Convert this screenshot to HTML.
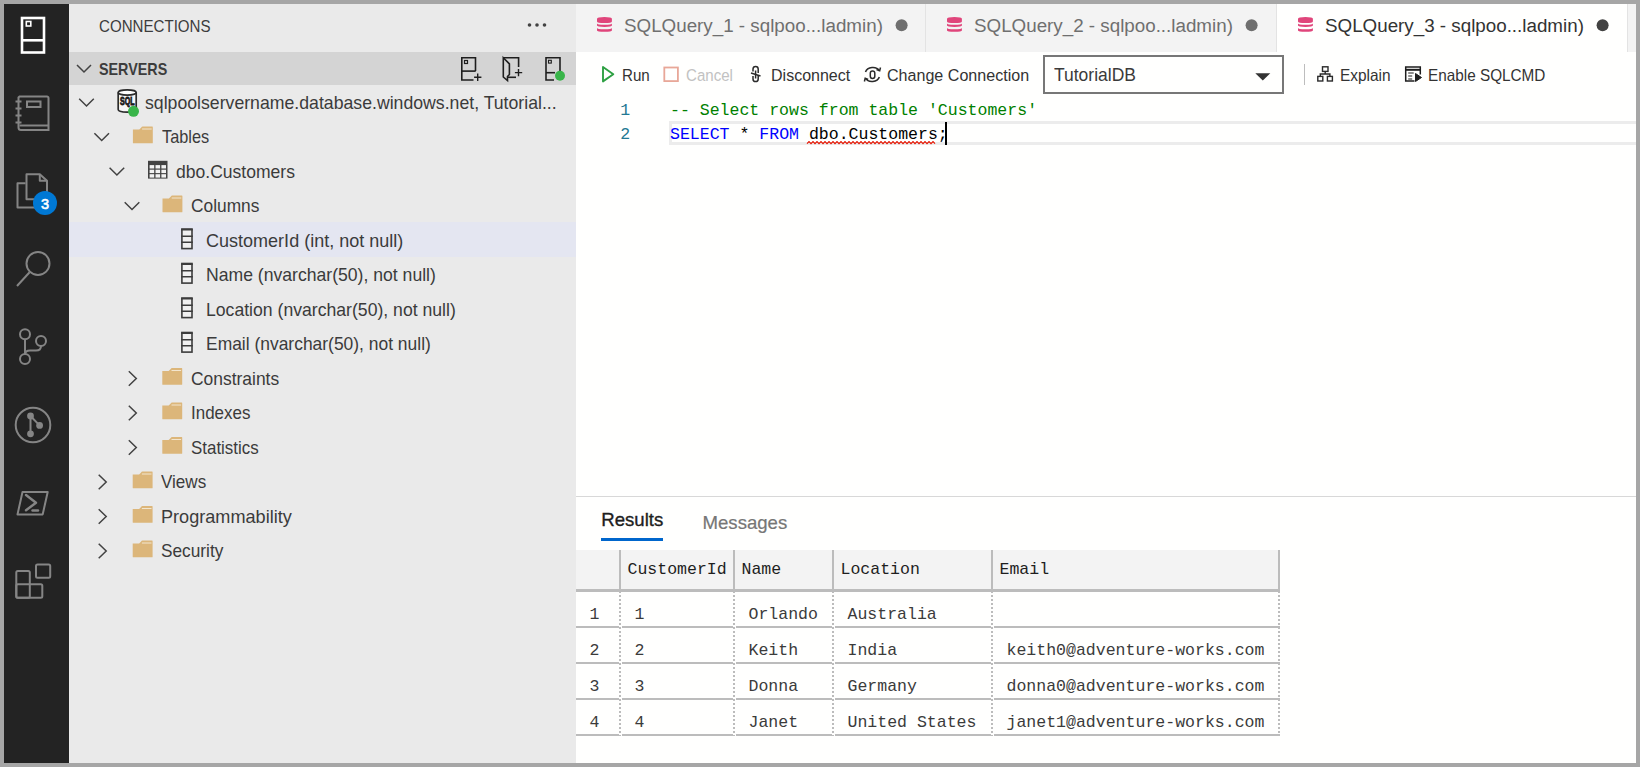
<!DOCTYPE html>
<html><head><meta charset="utf-8">
<style>
*{margin:0;padding:0;box-sizing:border-box}
html,body{width:1640px;height:767px;overflow:hidden;background:#a6a6a6;font-family:"Liberation Sans",sans-serif}
.a{position:absolute;white-space:nowrap}
svg{position:absolute;left:0;top:0}
</style></head><body>
<div class="a" style="left:4px;top:4px;width:65px;height:759px;background:#232323;"></div>
<div class="a" style="left:69px;top:4px;width:507px;height:759px;background:#eaeaea;"></div>
<div class="a" style="left:69px;top:52px;width:507px;height:33px;background:#d4d4d4;"></div>
<div class="a" style="left:69px;top:222px;width:507px;height:35px;background:#e4e6f1;"></div>
<div class="a" style="left:576px;top:4px;width:1060px;height:759px;background:#fffffe;"></div>
<div class="a" style="left:576px;top:4px;width:1060px;height:48px;background:#f3f3f3;"></div>
<div class="a" style="left:1277px;top:4px;width:350px;height:48px;background:#fffffe;"></div>
<div class="a" style="left:925px;top:4px;width:1px;height:48px;background:#e3e3e3;"></div>
<div class="a" style="left:1276px;top:4px;width:1px;height:48px;background:#e3e3e3;"></div>
<div class="a" style="left:1627px;top:4px;width:1px;height:48px;background:#e3e3e3;"></div>
<div class="a" style="left:99.00px;top:16.89px;font-size:16.7px;line-height:20.04px;height:20.04px;color:#3c3c3c;font-family:'Liberation Sans',sans-serif;font-weight:normal;transform:scaleX(0.905);transform-origin:0 0">CONNECTIONS</div>
<div class="a" style="left:99.40px;top:60.34px;font-size:16.2px;line-height:19.44px;height:19.44px;color:#3c3c3c;font-family:'Liberation Sans',sans-serif;font-weight:bold;transform:scaleX(0.885);transform-origin:0 0">SERVERS</div>
<div class="a" style="left:145.20px;top:92.88px;font-size:17.7px;line-height:21.24px;height:21.24px;color:#3b3b3b;font-family:'Liberation Sans',sans-serif;font-weight:normal;transform:scaleX(0.9993);transform-origin:0 0;">sqlpoolservername.database.windows.net, Tutorial...</div>
<div class="a" style="left:161.50px;top:127.38px;font-size:17.7px;line-height:21.24px;height:21.24px;color:#3b3b3b;font-family:'Liberation Sans',sans-serif;font-weight:normal;transform:scaleX(0.9227);transform-origin:0 0;">Tables</div>
<div class="a" style="left:176.10px;top:161.88px;font-size:17.7px;line-height:21.24px;height:21.24px;color:#3b3b3b;font-family:'Liberation Sans',sans-serif;font-weight:normal;transform:scaleX(0.9916);transform-origin:0 0;">dbo.Customers</div>
<div class="a" style="left:191.10px;top:196.38px;font-size:17.7px;line-height:21.24px;height:21.24px;color:#3b3b3b;font-family:'Liberation Sans',sans-serif;font-weight:normal;transform:scaleX(0.9796);transform-origin:0 0;">Columns</div>
<div class="a" style="left:206.20px;top:230.88px;font-size:17.7px;line-height:21.24px;height:21.24px;color:#3b3b3b;font-family:'Liberation Sans',sans-serif;font-weight:normal;transform:scaleX(1.0190);transform-origin:0 0;">CustomerId (int, not null)</div>
<div class="a" style="left:206.20px;top:265.38px;font-size:17.7px;line-height:21.24px;height:21.24px;color:#3b3b3b;font-family:'Liberation Sans',sans-serif;font-weight:normal;transform:scaleX(0.9950);transform-origin:0 0;">Name (nvarchar(50), not null)</div>
<div class="a" style="left:206.20px;top:299.88px;font-size:17.7px;line-height:21.24px;height:21.24px;color:#3b3b3b;font-family:'Liberation Sans',sans-serif;font-weight:normal;transform:scaleX(0.9964);transform-origin:0 0;">Location (nvarchar(50), not null)</div>
<div class="a" style="left:206.20px;top:334.38px;font-size:17.7px;line-height:21.24px;height:21.24px;color:#3b3b3b;font-family:'Liberation Sans',sans-serif;font-weight:normal;transform:scaleX(0.9858);transform-origin:0 0;">Email (nvarchar(50), not null)</div>
<div class="a" style="left:191.10px;top:368.88px;font-size:17.7px;line-height:21.24px;height:21.24px;color:#3b3b3b;font-family:'Liberation Sans',sans-serif;font-weight:normal;transform:scaleX(0.9853);transform-origin:0 0;">Constraints</div>
<div class="a" style="left:191.10px;top:403.38px;font-size:17.7px;line-height:21.24px;height:21.24px;color:#3b3b3b;font-family:'Liberation Sans',sans-serif;font-weight:normal;transform:scaleX(0.9582);transform-origin:0 0;">Indexes</div>
<div class="a" style="left:191.10px;top:437.88px;font-size:17.7px;line-height:21.24px;height:21.24px;color:#3b3b3b;font-family:'Liberation Sans',sans-serif;font-weight:normal;transform:scaleX(0.9562);transform-origin:0 0;">Statistics</div>
<div class="a" style="left:161.00px;top:472.38px;font-size:17.7px;line-height:21.24px;height:21.24px;color:#3b3b3b;font-family:'Liberation Sans',sans-serif;font-weight:normal;transform:scaleX(0.9636);transform-origin:0 0;">Views</div>
<div class="a" style="left:161.00px;top:506.88px;font-size:17.7px;line-height:21.24px;height:21.24px;color:#3b3b3b;font-family:'Liberation Sans',sans-serif;font-weight:normal;transform:scaleX(1.0236);transform-origin:0 0;">Programmability</div>
<div class="a" style="left:161.00px;top:541.38px;font-size:17.7px;line-height:21.24px;height:21.24px;color:#3b3b3b;font-family:'Liberation Sans',sans-serif;font-weight:normal;transform:scaleX(0.9759);transform-origin:0 0;">Security</div>
<div class="a" style="left:624.00px;top:14.79px;font-size:18.8px;line-height:22.56px;height:22.56px;color:#6f6f6f;font-family:'Liberation Sans',sans-serif;font-weight:normal;">SQLQuery_1 - sqlpoo...ladmin)</div>
<div class="a" style="left:974.00px;top:14.79px;font-size:18.8px;line-height:22.56px;height:22.56px;color:#6f6f6f;font-family:'Liberation Sans',sans-serif;font-weight:normal;">SQLQuery_2 - sqlpoo...ladmin)</div>
<div class="a" style="left:1325.00px;top:14.79px;font-size:18.8px;line-height:22.56px;height:22.56px;color:#333333;font-family:'Liberation Sans',sans-serif;font-weight:normal;">SQLQuery_3 - sqlpoo...ladmin)</div>
<div class="a" style="left:621.60px;top:65.79px;font-size:16.7px;line-height:20.04px;height:20.04px;color:#333333;font-family:'Liberation Sans',sans-serif;font-weight:normal;transform:scaleX(0.9072);transform-origin:0 0;">Run</div>
<div class="a" style="left:686.00px;top:65.79px;font-size:16.7px;line-height:20.04px;height:20.04px;color:#c2c2c2;font-family:'Liberation Sans',sans-serif;font-weight:normal;transform:scaleX(0.9042);transform-origin:0 0;">Cancel</div>
<div class="a" style="left:770.60px;top:65.79px;font-size:16.7px;line-height:20.04px;height:20.04px;color:#333333;font-family:'Liberation Sans',sans-serif;font-weight:normal;transform:scaleX(0.9598);transform-origin:0 0;">Disconnect</div>
<div class="a" style="left:887.00px;top:65.79px;font-size:16.7px;line-height:20.04px;height:20.04px;color:#333333;font-family:'Liberation Sans',sans-serif;font-weight:normal;transform:scaleX(0.9632);transform-origin:0 0;">Change Connection</div>
<div class="a" style="left:1043px;top:55px;width:241px;height:39px;border:2px solid #777777;background:#fffffe"></div>
<div class="a" style="left:1053.60px;top:64.53px;font-size:18.2px;line-height:21.84px;height:21.84px;color:#3a3a3a;font-family:'Liberation Sans',sans-serif;font-weight:normal;transform:scaleX(0.9612);transform-origin:0 0;">TutorialDB</div>
<div class="a" style="left:1304px;top:64px;width:1px;height:21px;background:#bdbdbd;"></div>
<div class="a" style="left:1340.20px;top:65.87px;font-size:16.5px;line-height:19.80px;height:19.80px;color:#333333;font-family:'Liberation Sans',sans-serif;font-weight:normal;transform:scaleX(0.9350);transform-origin:0 0;">Explain</div>
<div class="a" style="left:1427.50px;top:65.87px;font-size:16.5px;line-height:19.80px;height:19.80px;color:#333333;font-family:'Liberation Sans',sans-serif;font-weight:normal;transform:scaleX(0.9277);transform-origin:0 0;">Enable SQLCMD</div>
<div class="a" style="left:620.30px;top:101.21px;font-size:16.55px;line-height:19.86px;height:19.86px;color:#237893;font-family:'Liberation Mono',monospace;font-weight:normal;">1</div>
<div class="a" style="left:620.30px;top:125.21px;font-size:16.55px;line-height:19.86px;height:19.86px;color:#237893;font-family:'Liberation Mono',monospace;font-weight:normal;">2</div>
<div class="a" style="left:669px;top:121px;width:967px;height:24px;border:3px solid #ececec;border-right:none"></div>
<div class="a" style="left:670.00px;top:101.21px;font-size:16.55px;line-height:19.86px;height:19.86px;color:#008000;font-family:'Liberation Mono',monospace;font-weight:normal;"><span style="color:#008000">-- Select rows from table 'Customers'</span></div>
<div class="a" style="left:670.00px;top:125.21px;font-size:16.55px;line-height:19.86px;height:19.86px;color:#000000;font-family:'Liberation Mono',monospace;font-weight:normal;"><span style="color:#0000ff">SELECT</span> * <span style="color:#0000ff">FROM</span> dbo.Customers;</div>
<div class="a" style="left:944.6px;top:121.7px;width:2.6px;height:23px;background:#000000;"></div>
<div class="a" style="left:576px;top:495.6px;width:1060px;height:1.8px;background:#d8d8d8;"></div>
<div class="a" style="left:601.30px;top:508.97px;font-size:18.6px;line-height:22.32px;height:22.32px;color:#1e1e1e;font-family:'Liberation Sans',sans-serif;font-weight:normal;-webkit-text-stroke:0.35px #1e1e1e">Results</div>
<div class="a" style="left:601px;top:538px;width:62px;height:3px;background:#0066cc;"></div>
<div class="a" style="left:702.50px;top:511.57px;font-size:18.6px;line-height:22.32px;height:22.32px;color:#767676;font-family:'Liberation Sans',sans-serif;font-weight:normal;-webkit-text-stroke:0.2px #767676">Messages</div>
<div class="a" style="left:576px;top:550px;width:704px;height:40px;background:#f3f3f3;"></div>
<div class="a" style="left:576px;top:589px;width:704px;height:3px;background:#bcbcbc;"></div>
<div class="a" style="left:619px;top:550px;width:2px;height:40px;background:#bcbcbc;"></div>
<div class="a" style="left:733px;top:550px;width:2px;height:40px;background:#bcbcbc;"></div>
<div class="a" style="left:832px;top:550px;width:2px;height:40px;background:#bcbcbc;"></div>
<div class="a" style="left:991px;top:550px;width:2px;height:40px;background:#bcbcbc;"></div>
<div class="a" style="left:1278px;top:550px;width:2px;height:40px;background:#bcbcbc;"></div>
<div class="a" style="left:627.50px;top:560.31px;font-size:16.55px;line-height:19.86px;height:19.86px;color:#1e1e1e;font-family:'Liberation Mono',monospace;font-weight:normal;">CustomerId</div>
<div class="a" style="left:741.50px;top:560.31px;font-size:16.55px;line-height:19.86px;height:19.86px;color:#1e1e1e;font-family:'Liberation Mono',monospace;font-weight:normal;">Name</div>
<div class="a" style="left:840.50px;top:560.31px;font-size:16.55px;line-height:19.86px;height:19.86px;color:#1e1e1e;font-family:'Liberation Mono',monospace;font-weight:normal;">Location</div>
<div class="a" style="left:999.50px;top:560.31px;font-size:16.55px;line-height:19.86px;height:19.86px;color:#1e1e1e;font-family:'Liberation Mono',monospace;font-weight:normal;">Email</div>
<div class="a" style="left:576px;top:626px;width:43px;height:2px;background:#bcbcbc;"></div>
<div class="a" style="left:622px;top:626px;width:111px;height:2px;background:#bcbcbc;"></div>
<div class="a" style="left:736px;top:626px;width:96px;height:2px;background:#bcbcbc;"></div>
<div class="a" style="left:835px;top:626px;width:156px;height:2px;background:#bcbcbc;"></div>
<div class="a" style="left:994px;top:626px;width:286px;height:2px;background:#bcbcbc;"></div>
<div class="a" style="left:589.50px;top:605.21px;font-size:16.55px;line-height:19.86px;height:19.86px;color:#3b3b3b;font-family:'Liberation Mono',monospace;font-weight:normal;">1</div>
<div class="a" style="left:634.50px;top:605.21px;font-size:16.55px;line-height:19.86px;height:19.86px;color:#3b3b3b;font-family:'Liberation Mono',monospace;font-weight:normal;">1</div>
<div class="a" style="left:748.50px;top:605.21px;font-size:16.55px;line-height:19.86px;height:19.86px;color:#3b3b3b;font-family:'Liberation Mono',monospace;font-weight:normal;">Orlando</div>
<div class="a" style="left:847.50px;top:605.21px;font-size:16.55px;line-height:19.86px;height:19.86px;color:#3b3b3b;font-family:'Liberation Mono',monospace;font-weight:normal;">Australia</div>
<div class="a" style="left:576px;top:662px;width:43px;height:2px;background:#bcbcbc;"></div>
<div class="a" style="left:622px;top:662px;width:111px;height:2px;background:#bcbcbc;"></div>
<div class="a" style="left:736px;top:662px;width:96px;height:2px;background:#bcbcbc;"></div>
<div class="a" style="left:835px;top:662px;width:156px;height:2px;background:#bcbcbc;"></div>
<div class="a" style="left:994px;top:662px;width:286px;height:2px;background:#bcbcbc;"></div>
<div class="a" style="left:589.50px;top:641.21px;font-size:16.55px;line-height:19.86px;height:19.86px;color:#3b3b3b;font-family:'Liberation Mono',monospace;font-weight:normal;">2</div>
<div class="a" style="left:634.50px;top:641.21px;font-size:16.55px;line-height:19.86px;height:19.86px;color:#3b3b3b;font-family:'Liberation Mono',monospace;font-weight:normal;">2</div>
<div class="a" style="left:748.50px;top:641.21px;font-size:16.55px;line-height:19.86px;height:19.86px;color:#3b3b3b;font-family:'Liberation Mono',monospace;font-weight:normal;">Keith</div>
<div class="a" style="left:847.50px;top:641.21px;font-size:16.55px;line-height:19.86px;height:19.86px;color:#3b3b3b;font-family:'Liberation Mono',monospace;font-weight:normal;">India</div>
<div class="a" style="left:1006.50px;top:641.21px;font-size:16.55px;line-height:19.86px;height:19.86px;color:#3b3b3b;font-family:'Liberation Mono',monospace;font-weight:normal;">keith0@adventure-works.com</div>
<div class="a" style="left:576px;top:698px;width:43px;height:2px;background:#bcbcbc;"></div>
<div class="a" style="left:622px;top:698px;width:111px;height:2px;background:#bcbcbc;"></div>
<div class="a" style="left:736px;top:698px;width:96px;height:2px;background:#bcbcbc;"></div>
<div class="a" style="left:835px;top:698px;width:156px;height:2px;background:#bcbcbc;"></div>
<div class="a" style="left:994px;top:698px;width:286px;height:2px;background:#bcbcbc;"></div>
<div class="a" style="left:589.50px;top:677.21px;font-size:16.55px;line-height:19.86px;height:19.86px;color:#3b3b3b;font-family:'Liberation Mono',monospace;font-weight:normal;">3</div>
<div class="a" style="left:634.50px;top:677.21px;font-size:16.55px;line-height:19.86px;height:19.86px;color:#3b3b3b;font-family:'Liberation Mono',monospace;font-weight:normal;">3</div>
<div class="a" style="left:748.50px;top:677.21px;font-size:16.55px;line-height:19.86px;height:19.86px;color:#3b3b3b;font-family:'Liberation Mono',monospace;font-weight:normal;">Donna</div>
<div class="a" style="left:847.50px;top:677.21px;font-size:16.55px;line-height:19.86px;height:19.86px;color:#3b3b3b;font-family:'Liberation Mono',monospace;font-weight:normal;">Germany</div>
<div class="a" style="left:1006.50px;top:677.21px;font-size:16.55px;line-height:19.86px;height:19.86px;color:#3b3b3b;font-family:'Liberation Mono',monospace;font-weight:normal;">donna0@adventure-works.com</div>
<div class="a" style="left:576px;top:734px;width:43px;height:2px;background:#bcbcbc;"></div>
<div class="a" style="left:622px;top:734px;width:111px;height:2px;background:#bcbcbc;"></div>
<div class="a" style="left:736px;top:734px;width:96px;height:2px;background:#bcbcbc;"></div>
<div class="a" style="left:835px;top:734px;width:156px;height:2px;background:#bcbcbc;"></div>
<div class="a" style="left:994px;top:734px;width:286px;height:2px;background:#bcbcbc;"></div>
<div class="a" style="left:589.50px;top:713.21px;font-size:16.55px;line-height:19.86px;height:19.86px;color:#3b3b3b;font-family:'Liberation Mono',monospace;font-weight:normal;">4</div>
<div class="a" style="left:634.50px;top:713.21px;font-size:16.55px;line-height:19.86px;height:19.86px;color:#3b3b3b;font-family:'Liberation Mono',monospace;font-weight:normal;">4</div>
<div class="a" style="left:748.50px;top:713.21px;font-size:16.55px;line-height:19.86px;height:19.86px;color:#3b3b3b;font-family:'Liberation Mono',monospace;font-weight:normal;">Janet</div>
<div class="a" style="left:847.50px;top:713.21px;font-size:16.55px;line-height:19.86px;height:19.86px;color:#3b3b3b;font-family:'Liberation Mono',monospace;font-weight:normal;">United States</div>
<div class="a" style="left:1006.50px;top:713.21px;font-size:16.55px;line-height:19.86px;height:19.86px;color:#3b3b3b;font-family:'Liberation Mono',monospace;font-weight:normal;">janet1@adventure-works.com</div>
<div class="a" style="left:619px;top:592px;width:2px;height:144px;background:repeating-linear-gradient(to bottom,#bcbcbc 0 1px,transparent 1px 3px,#bcbcbc 3px 4px)"></div>
<div class="a" style="left:733px;top:592px;width:2px;height:144px;background:repeating-linear-gradient(to bottom,#bcbcbc 0 1px,transparent 1px 3px,#bcbcbc 3px 4px)"></div>
<div class="a" style="left:832px;top:592px;width:2px;height:144px;background:repeating-linear-gradient(to bottom,#bcbcbc 0 1px,transparent 1px 3px,#bcbcbc 3px 4px)"></div>
<div class="a" style="left:991px;top:592px;width:2px;height:144px;background:repeating-linear-gradient(to bottom,#bcbcbc 0 1px,transparent 1px 3px,#bcbcbc 3px 4px)"></div>
<div class="a" style="left:1278px;top:592px;width:2px;height:144px;background:repeating-linear-gradient(to bottom,#bcbcbc 0 1px,transparent 1px 3px,#bcbcbc 3px 4px)"></div>
<svg width="1640" height="767" viewBox="0 0 1640 767">

 <g fill="none" stroke="#fff" stroke-width="2.6">
  <rect x="22" y="18" width="22" height="34.5"/>
  <line x1="22" y1="40.3" x2="44" y2="40.3"/>
  <rect x="26.3" y="21.5" width="4.5" height="4.5" stroke-width="1.6"/>
 </g>
 <g fill="none" stroke="#858585" stroke-width="2">
  <path d="M19.5 96.5 h27.5 a1.5 1.5 0 0 1 1.5 1.5 v32 h-27.5 a2.5 2.5 0 0 1 -2.5 -2.5 v-30 z"/>
  <path d="M19.5 125.5 h29"/>
  <rect x="27" y="101.5" width="13.5" height="5.5"/>
  <path d="M15.5 101.5h6 M15.5 108.5h6 M15.5 115.5h6 M15.5 122.5h6"/>
  <path d="M25.5 183.3 h-8 v24.2 h18 v-5" stroke-linejoin="round"/>
  <path d="M26.5 174.2 h13.3 l7.2 6.6 v18.5 h-20.5 z" stroke-linejoin="round"/>
  <path d="M39.8 174.2 v6.6 h7.2" stroke-linejoin="round"/>
  <circle cx="38" cy="263.5" r="11.5"/>
  <path d="M29.6 272.3 L17 286"/>
  <circle cx="25" cy="334.3" r="5"/>
  <circle cx="41" cy="341" r="5"/>
  <circle cx="25" cy="359" r="5"/>
  <path d="M25 339.3 V354 M41 346 q0 4.5 -5 4.5 h-6 q-5 0 -5 4"/>
  <circle cx="33" cy="425" r="17.3"/>
  <path d="M30.5 416 V434 M30.5 416 L39.6 425.4"/>
 </g>
 <g fill="#858585">
  <circle cx="30.5" cy="416" r="3.4"/><circle cx="39.6" cy="425.4" r="3.4"/><circle cx="30.5" cy="433.8" r="3.4"/>
 </g>
 <g fill="none" stroke="#858585" stroke-width="2" stroke-linejoin="round" stroke-linecap="round">
  <path d="M22.5 492 h25.2 l-5 22.4 h-25.2 z"/>
  <path d="M26 495 l10 7.8 l-10 7.5" stroke-width="2.4"/>
  <path d="M32.5 510.5 h5.5" stroke-width="2.4"/>
 </g>
 <g fill="none" stroke="#858585" stroke-width="2">
  <rect x="16.3" y="571" width="13.5" height="26.7" rx="1.5"/>
  <rect x="16.3" y="584.3" width="26" height="13.4" rx="1.5"/>
  <rect x="36" y="564.5" width="14.2" height="13.2" rx="1.5"/>
 </g>
 <circle cx="45" cy="203" r="12" fill="#0078d4"/>
 <text x="45" y="208.5" text-anchor="middle" font-family="Liberation Sans" font-size="14.5" fill="#fff" stroke="#fff" stroke-width="0.6">3</text>

<g fill="#424242"><circle cx="529.5" cy="25" r="1.8"/><circle cx="537" cy="25" r="1.8"/><circle cx="544.5" cy="25" r="1.8"/></g>
<path d="M77 65 L84 72 L91 65" fill="none" stroke="#424242" stroke-width="1.5"/>
<path d="M79.2 98.7 L86.5 106.0 L93.8 98.7" fill="none" stroke="#424242" stroke-width="1.5"/>
<g fill="none" stroke="#2b2b2b" stroke-width="1.7"><path d="M118.2 92.5 v17 q0 2.6 9 2.6 q9 0 9 -2.6 v-17" fill="#f7f7f7"/><ellipse cx="127.2" cy="92.5" rx="9" ry="2.6" fill="#fff"/></g>
<text x="127.2" y="105.3" text-anchor="middle" font-family="Liberation Sans" font-weight="bold" font-size="10" fill="#1a1a1a" stroke="#1a1a1a" stroke-width="0.8" textLength="14.5" lengthAdjust="spacingAndGlyphs">SQL</text>
<circle cx="133.5" cy="111.3" r="5.5" fill="#39b54a"/>
<path d="M94.4 133.2 L101.7 140.5 L109.0 133.2" fill="none" stroke="#424242" stroke-width="1.5"/>
<path d="M132.9 129.6 h6.4 l2 -2.2 q0.4 -0.9 1.4 -0.9 h9.6 q0.5 0 0.5 0.6 v15.6 q0 0.5 -0.5 0.5 h-18.8 q-0.6 0 -0.6 -0.5 z" fill="#dcb67a"/>
<path d="M142.1 129.0 h9.6" stroke="#f3e6cf" stroke-width="1"/>
<path d="M109.6 167.7 L116.9 175.0 L124.2 167.7" fill="none" stroke="#424242" stroke-width="1.5"/>
<rect x="148.0" y="160.8" width="19.5" height="17.8" fill="#424242"/>
<rect x="149.6" y="165.1" width="4.6" height="3.4" fill="#f2f2f2"/>
<rect x="155.5" y="165.1" width="4.6" height="3.4" fill="#f2f2f2"/>
<rect x="161.4" y="165.1" width="4.6" height="3.4" fill="#f2f2f2"/>
<rect x="149.6" y="169.7" width="4.6" height="3.4" fill="#f2f2f2"/>
<rect x="155.5" y="169.7" width="4.6" height="3.4" fill="#f2f2f2"/>
<rect x="161.4" y="169.7" width="4.6" height="3.4" fill="#f2f2f2"/>
<rect x="149.6" y="174.2" width="4.6" height="3.4" fill="#f2f2f2"/>
<rect x="155.5" y="174.2" width="4.6" height="3.4" fill="#f2f2f2"/>
<rect x="161.4" y="174.2" width="4.6" height="3.4" fill="#f2f2f2"/>
<path d="M124.7 202.2 L132.0 209.5 L139.3 202.2" fill="none" stroke="#424242" stroke-width="1.5"/>
<path d="M162.5 198.6 h6.4 l2 -2.2 q0.4 -0.9 1.4 -0.9 h9.6 q0.5 0 0.5 0.6 v15.6 q0 0.5 -0.5 0.5 h-18.8 q-0.6 0 -0.6 -0.5 z" fill="#dcb67a"/>
<path d="M171.7 198.0 h9.6" stroke="#f3e6cf" stroke-width="1"/>
<g><rect x="181.9" y="229.0" width="10.1" height="19.6" fill="#f0f0f0" stroke="#3c3c3c" stroke-width="1.6"/><path d="M181.1 229.8 h11.7 M181.1 236.2 h11.7 M181.1 242.3 h11.7" stroke="#3c3c3c" stroke-width="1.4"/></g>
<g><rect x="181.9" y="263.5" width="10.1" height="19.6" fill="#f0f0f0" stroke="#3c3c3c" stroke-width="1.6"/><path d="M181.1 264.3 h11.7 M181.1 270.7 h11.7 M181.1 276.8 h11.7" stroke="#3c3c3c" stroke-width="1.4"/></g>
<g><rect x="181.9" y="298.0" width="10.1" height="19.6" fill="#f0f0f0" stroke="#3c3c3c" stroke-width="1.6"/><path d="M181.1 298.8 h11.7 M181.1 305.2 h11.7 M181.1 311.3 h11.7" stroke="#3c3c3c" stroke-width="1.4"/></g>
<g><rect x="181.9" y="332.5" width="10.1" height="19.6" fill="#f0f0f0" stroke="#3c3c3c" stroke-width="1.6"/><path d="M181.1 333.3 h11.7 M181.1 339.7 h11.7 M181.1 345.8 h11.7" stroke="#3c3c3c" stroke-width="1.4"/></g>
<path d="M128.8 371.2 L136.3 378.5 L128.8 385.8" fill="none" stroke="#424242" stroke-width="1.5"/>
<path d="M162.3 371.1 h6.4 l2 -2.2 q0.4 -0.9 1.4 -0.9 h9.6 q0.5 0 0.5 0.6 v15.6 q0 0.5 -0.5 0.5 h-18.8 q-0.6 0 -0.6 -0.5 z" fill="#dcb67a"/>
<path d="M171.5 370.5 h9.6" stroke="#f3e6cf" stroke-width="1"/>
<path d="M128.8 405.7 L136.3 413.0 L128.8 420.3" fill="none" stroke="#424242" stroke-width="1.5"/>
<path d="M162.3 405.6 h6.4 l2 -2.2 q0.4 -0.9 1.4 -0.9 h9.6 q0.5 0 0.5 0.6 v15.6 q0 0.5 -0.5 0.5 h-18.8 q-0.6 0 -0.6 -0.5 z" fill="#dcb67a"/>
<path d="M171.5 405.0 h9.6" stroke="#f3e6cf" stroke-width="1"/>
<path d="M128.8 440.2 L136.3 447.5 L128.8 454.8" fill="none" stroke="#424242" stroke-width="1.5"/>
<path d="M162.3 440.1 h6.4 l2 -2.2 q0.4 -0.9 1.4 -0.9 h9.6 q0.5 0 0.5 0.6 v15.6 q0 0.5 -0.5 0.5 h-18.8 q-0.6 0 -0.6 -0.5 z" fill="#dcb67a"/>
<path d="M171.5 439.5 h9.6" stroke="#f3e6cf" stroke-width="1"/>
<path d="M98.7 474.7 L106.2 482.0 L98.7 489.3" fill="none" stroke="#424242" stroke-width="1.5"/>
<path d="M132.7 474.6 h6.4 l2 -2.2 q0.4 -0.9 1.4 -0.9 h9.6 q0.5 0 0.5 0.6 v15.6 q0 0.5 -0.5 0.5 h-18.8 q-0.6 0 -0.6 -0.5 z" fill="#dcb67a"/>
<path d="M141.9 474.0 h9.6" stroke="#f3e6cf" stroke-width="1"/>
<path d="M98.7 509.2 L106.2 516.5 L98.7 523.8" fill="none" stroke="#424242" stroke-width="1.5"/>
<path d="M132.7 509.1 h6.4 l2 -2.2 q0.4 -0.9 1.4 -0.9 h9.6 q0.5 0 0.5 0.6 v15.6 q0 0.5 -0.5 0.5 h-18.8 q-0.6 0 -0.6 -0.5 z" fill="#dcb67a"/>
<path d="M141.9 508.5 h9.6" stroke="#f3e6cf" stroke-width="1"/>
<path d="M98.7 543.7 L106.2 551.0 L98.7 558.3" fill="none" stroke="#424242" stroke-width="1.5"/>
<path d="M132.7 543.6 h6.4 l2 -2.2 q0.4 -0.9 1.4 -0.9 h9.6 q0.5 0 0.5 0.6 v15.6 q0 0.5 -0.5 0.5 h-18.8 q-0.6 0 -0.6 -0.5 z" fill="#dcb67a"/>
<path d="M141.9 543.0 h9.6" stroke="#f3e6cf" stroke-width="1"/>
<g fill="none" stroke="#1e1e1e" stroke-width="1.6">
 <path d="M475.5 71 V57.8 H461.8 V80 H473.5"/><path d="M461.8 71.1 H475.7"/><rect x="464.5" y="60.5" width="3" height="3" stroke-width="1.2"/>
 <path d="M477.7 73.6 v7.3 M474.1 77.3 h7.3" stroke-width="1.4"/>
 <path d="M503.3 57.8 H518.6 V67"/><path d="M503.3 57.8 L509.4 63.9 V74.5 L507.5 76.5 V80.5 L503.3 77 V58 z"/><path d="M508 77.3 H516"/>
 <path d="M518.5 69 v7.3 M514.9 72.6 h7.3" stroke-width="1.4"/>
 <path d="M560 71 V57.8 H546 V80 H554"/><path d="M546 72.7 H555"/><rect x="548.5" y="60.3" width="2.8" height="2.8" stroke-width="1.1"/>
</g>
<circle cx="560" cy="75.8" r="5" fill="#39b54a"/>
<g fill="#e0457b"><path d="M597 18.6 q0 -1.6 7.45 -1.6 q7.45 0 7.45 1.6 v3 q0 1.5 -7.45 1.5 q-7.45 0 -7.45 -1.5 z"/><path d="M597 23.4 q0 1.3 7.45 1.3 q7.45 0 7.45 -1.3 v2.2 q0 1.3 -7.45 1.3 q-7.45 0 -7.45 -1.3 z"/><path d="M597 28 q0 1.3 7.45 1.3 q7.45 0 7.45 -1.3 v2.4 q0 1.4 -7.45 1.4 q-7.45 0 -7.45 -1.4 z"/></g>
<circle cx="901.6" cy="25.3" r="6" fill="#6f6f6f"/>
<g fill="#e0457b"><path d="M947 18.6 q0 -1.6 7.45 -1.6 q7.45 0 7.45 1.6 v3 q0 1.5 -7.45 1.5 q-7.45 0 -7.45 -1.5 z"/><path d="M947 23.4 q0 1.3 7.45 1.3 q7.45 0 7.45 -1.3 v2.2 q0 1.3 -7.45 1.3 q-7.45 0 -7.45 -1.3 z"/><path d="M947 28 q0 1.3 7.45 1.3 q7.45 0 7.45 -1.3 v2.4 q0 1.4 -7.45 1.4 q-7.45 0 -7.45 -1.4 z"/></g>
<circle cx="1251.6" cy="25.3" r="6" fill="#6f6f6f"/>
<g fill="#e0457b"><path d="M1298 18.6 q0 -1.6 7.45 -1.6 q7.45 0 7.45 1.6 v3 q0 1.5 -7.45 1.5 q-7.45 0 -7.45 -1.5 z"/><path d="M1298 23.4 q0 1.3 7.45 1.3 q7.45 0 7.45 -1.3 v2.2 q0 1.3 -7.45 1.3 q-7.45 0 -7.45 -1.3 z"/><path d="M1298 28 q0 1.3 7.45 1.3 q7.45 0 7.45 -1.3 v2.4 q0 1.4 -7.45 1.4 q-7.45 0 -7.45 -1.4 z"/></g>
<circle cx="1602.6" cy="25.3" r="6" fill="#424242"/>
<path d="M603 67 L613.3 74.2 L603 81.4 z" fill="none" stroke="#2ea043" stroke-width="1.9" stroke-linejoin="round"/>
<rect x="664.3" y="67.5" width="13.6" height="13.6" fill="none" stroke="#e8a798" stroke-width="1.8"/>
<g fill="none" stroke="#2b2b2b" stroke-width="1.5"><path d="M753 71.5 v-2.5 q0 -2.6 2.6 -2.6 q2.6 0 2.6 2.6 v4"/><path d="M753 76 v3 q0 2.6 2.6 2.6 q2.6 0 2.6 -2.6 v-4"/><path d="M751 73 l9.5 3"/><path d="M755.6 70.5 v8"/></g>
<g fill="none" stroke="#2b2b2b" stroke-width="1.5"><path d="M865.5 72 a7.5 6 0 0 1 14 -1.2"/><path d="M879.3 77 a7.5 6 0 0 1 -14 1.2"/><path d="M876.5 69.5 l3.2 1.3 l0.8 -3.3"/><path d="M868.2 79.5 l-3 -1.3 l-0.8 3.3"/><rect x="870.3" y="71" width="4.5" height="7.5" rx="2.2"/></g>
<path d="M1255.3 73.2 h15 l-7.5 7.4 z" fill="#333333"/>
<g fill="none" stroke="#2b2b2b" stroke-width="1.4"><rect x="1322.5" y="66.8" width="5.5" height="4.6"/><rect x="1317.8" y="76.4" width="5" height="4.6"/><rect x="1327.4" y="76.4" width="5" height="4.6"/><path d="M1325.2 71.4 v2.6 M1320.3 76.4 v-2.4 h9.6 v2.4"/></g>
<g fill="none" stroke="#1e1e1e" stroke-width="1.5"><path d="M1414.5 81 h-8.8 v-14 h14.6 v7.5"/><path d="M1405.7 69.8 h14.6" stroke-width="2"/><path d="M1408.2 73 h5.5 M1408.2 76 h4 M1408.2 79 h4" stroke-width="1.2"/><path d="M1415.5 73.5 l6 4 l-6 4 z" fill="#1e1e1e" stroke-width="1"/></g>
<path d="M807 143.6 l2 -2 l2 2 l2 -2 l2 2 l2 -2 l2 2 l2 -2 l2 2 l2 -2 l2 2 l2 -2 l2 2 l2 -2 l2 2 l2 -2 l2 2 l2 -2 l2 2 l2 -2 l2 2 l2 -2 l2 2 l2 -2 l2 2 l2 -2 l2 2 l2 -2 l2 2 l2 -2 l2 2 l2 -2 l2 2 l2 -2 l2 2 l2 -2 l2 2 l2 -2 l2 2 l2 -2 l2 2 l2 -2 l2 2 l2 -2 l2 2 l2 -2 l2 2 l2 -2 l2 2 l2 -2 l2 2 l2 -2 l2 2 l2 -2 l2 2 l2 -2 l2 2 l2 -2 l2 2 l2 -2 l2 2 l2 -2 l2 2 l2 -2 l2 2" fill="none" stroke="#e51400" stroke-width="1.2"/>
</svg>
</body></html>
